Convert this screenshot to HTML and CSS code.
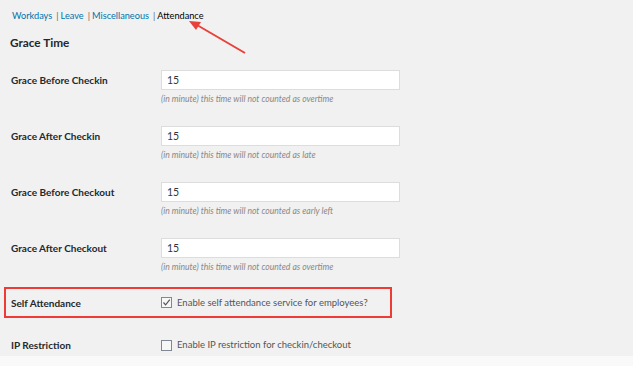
FILE: index.html
```html
<!DOCTYPE html>
<html>
<head>
<meta charset="utf-8">
<link rel="stylesheet" href="styles.css">
</head>
<body>
<div class="page">
  <nav class="subnav">
    <a class="link" href="#">Workdays</a><span class="sep">|</span><a class="link" href="#">Leave</a><span class="sep">|</span><a class="link" href="#">Miscellaneous</a><span class="sep">|</span><span class="current">Attendance</span>
  </nav>
  <h2 class="title">Grace Time</h2>
  <div class="form">
    <div class="row">
      <div class="label">Grace Before Checkin</div>
      <div class="field">
        <div class="input">15</div>
        <div class="desc">(in minute) this time will not counted as overtime</div>
      </div>
    </div>
    <div class="row">
      <div class="label">Grace After Checkin</div>
      <div class="field">
        <div class="input">15</div>
        <div class="desc">(in minute) this time will not counted as late</div>
      </div>
    </div>
    <div class="row">
      <div class="label">Grace Before Checkout</div>
      <div class="field">
        <div class="input">15</div>
        <div class="desc">(in minute) this time will not counted as early left</div>
      </div>
    </div>
    <div class="row">
      <div class="label">Grace After Checkout</div>
      <div class="field">
        <div class="input">15</div>
        <div class="desc">(in minute) this time will not counted as overtime</div>
      </div>
    </div>
    <div class="row check-row highlight">
      <div class="label">Self Attendance</div>
      <div class="check">
        <span class="box"><svg width="9" height="9" viewBox="0 0 9 9"><path d="M1.5 4.5 L3.6 6.8 L7.8 1.6" fill="none" stroke="#555" stroke-width="1.2"/></svg></span>
        <span class="check-text">Enable self attendance service for employees?</span>
      </div>
    </div>
    <div class="row check-row last">
      <div class="label">IP Restriction</div>
      <div class="check">
        <span class="box"></span>
        <span class="check-text">Enable IP restriction for checkin/checkout</span>
      </div>
    </div>
  </div>
  <svg class="arrow" width="70" height="44" viewBox="0 0 70 44">
    <line x1="60" y1="37" x2="12" y2="9" stroke="#e8403a" stroke-width="2"/>
    <polygon points="4,5 16,6 11,14" fill="#e8403a"/>
  </svg>
</div>
<div class="footer-strip"></div>
</body>
</html>
```
FILE: styles.css
```css
html, body {
  margin: 0;
  padding: 0;
  background: #f1f1f1;
  font-family: Lato, "Open Sans", sans-serif;
  color: #23282d;
}
.page {
  position: relative;
  height: 356px;
  overflow: hidden;
}
.subnav {
  padding: 8px 0 0 12px;
  font-size: 9.2px;
  line-height: 16px;
  height: 16px;
}
.link {
  color: #0073aa;
  text-decoration: none;
}
.sep {
  color: #666;
  margin: 0 2px 0 4px;
}
.current {
  color: #000;
}
.title {
  margin: 11px 0 0 10px;
  font-size: 11.8px;
  font-weight: 700;
  line-height: 16px;
}
.form {
  margin-top: 19px;
  padding-left: 11px;
}
.row {
  display: grid;
  grid-template-columns: 150px 239px;
  margin-bottom: 21px;
}
.label {
  font-size: 10px;
  font-weight: 700;
  line-height: 20px;
}
.input {
  box-sizing: border-box;
  height: 20px;
  background: #fff;
  border: 1px solid #ddd;
  padding-left: 5px;
  font-size: 10.5px;
  line-height: 18px;
  color: #32373c;
}
.desc {
  margin-top: 3px;
  font-size: 8.6px;
  line-height: 12px;
  font-style: italic;
  color: #888;
}
.check-row {
  align-items: center;
}
.highlight {
  margin-top: -7px;
  margin-left: -7px;
  padding-left: 5px;
  width: 379px;
  height: 27px;
  border: 2px solid #ef3b36;
  margin-bottom: 17px;
}
.check {
  display: flex;
  align-items: center;
  gap: 5px;
  white-space: nowrap;
}
.box {
  box-sizing: border-box;
  width: 11px;
  height: 11px;
  border: 1px solid #7e8993;
  background: #f7f7f7;
  display: flex;
  align-items: center;
  justify-content: center;
}
.check-text {
  font-size: 9.5px;
  line-height: 14px;
  color: #555;
}
.arrow {
  position: absolute;
  left: 185px;
  top: 16px;
}
.footer-strip {
  height: 10px;
  background: #f9f9f9;
}
```
